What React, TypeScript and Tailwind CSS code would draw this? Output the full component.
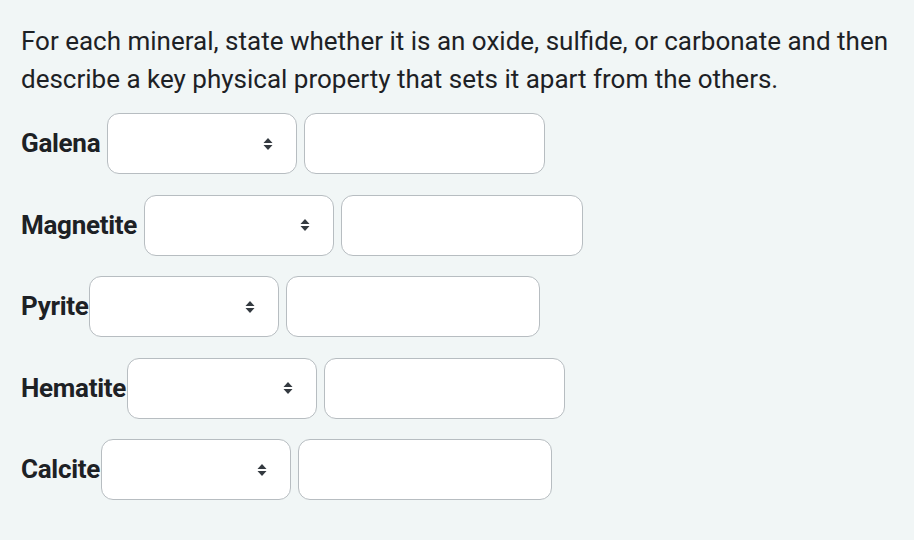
import React from 'react';

type Row = {
  name: string;
  labelGap: boolean;
  inputWidth: string;
};

const rows: Row[] = [
  { name: 'Galena', labelGap: true, inputWidth: 'w-[241px]' },
  { name: 'Magnetite', labelGap: true, inputWidth: 'w-[242px]' },
  { name: 'Pyrite', labelGap: false, inputWidth: 'w-[254px]' },
  { name: 'Hematite', labelGap: false, inputWidth: 'w-[241px]' },
  { name: 'Calcite', labelGap: false, inputWidth: 'w-[254px]' },
];

function SelectArrows() {
  return (
    <svg width="10" height="14" viewBox="0 0 10 14" className="absolute right-[23px] top-1/2 -translate-y-1/2">
      <path d="M5 1 L9.5 6 L0.5 6 Z" fill="#343a40" />
      <path d="M5 13 L9.5 8 L0.5 8 Z" fill="#343a40" />
    </svg>
  );
}

export default function App() {
  return (
    <div
      className="min-h-[540px] w-[914px] bg-[#f1f6f6] px-[21px] pt-[22px] text-[#1d2125]"
      style={{ fontFamily: 'Roboto, "Liberation Sans", sans-serif' }}
    >
      <p className="text-[26px] leading-[38px]">
        For each mineral, state whether it is an oxide, sulfide, or carbonate and then describe a key physical
        property that sets it apart from the others.
      </p>

      <div className="mt-[15px] flex flex-col gap-[20.5px]">
        {rows.map((row) => (
          <div key={row.name} className="flex items-center">
            <span className={`text-[26px] font-bold tracking-[-0.3px] ${row.labelGap ? 'mr-[7px]' : 'mr-[1px]'}`}>
              {row.name}
            </span>
            <div className="relative h-[61px] w-[190px] rounded-[12px] border border-[#b7bdc1] bg-white">
              <SelectArrows />
            </div>
            <input
              type="text"
              className={`ml-[7px] h-[61px] ${row.inputWidth} rounded-[12px] border border-[#b7bdc1] bg-white`}
            />
          </div>
        ))}
      </div>
    </div>
  );
}
